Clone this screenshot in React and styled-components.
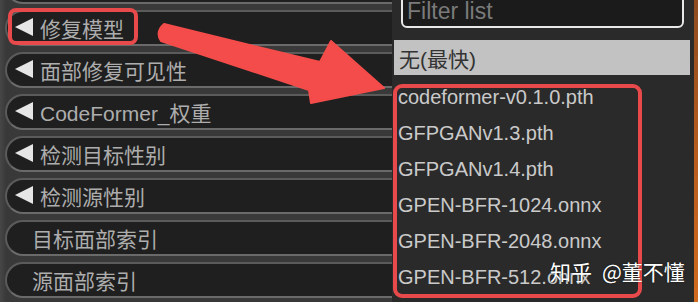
import React from "react";
import styled, { createGlobalStyle } from "styled-components";

const GlobalStyle = createGlobalStyle`
  html, body { margin: 0; padding: 0; background: #383838; }
  body { font-family: "Liberation Sans", "Noto Sans CJK SC", sans-serif; }
  * { box-sizing: border-box; }
`;

const Stage = styled.div`
  width: 698px;
  height: 302px;
  overflow: hidden;
  display: flex;
  background: #383838;
`;

const Main = styled.div`
  position: relative;
  flex: 1;
  overflow: hidden;
  background: linear-gradient(90deg, #474747 0px, #393939 6px);
`;

const EdgeStrip = styled.div`
  width: 4px;
  background: linear-gradient(180deg, #8e4b1f 0%, #b65c1f 50%, #d16b1f 100%);
`;

const RowList = styled.div`
  display: flex;
  flex-direction: column;
  gap: 6px;
  margin-top: -32px;
  padding-left: 5px;
  margin-right: -40px;
`;

const Row = styled.div`
  height: 36px;
  border: 2px solid #5b5b5b;
  border-bottom-color: #6a6a6a;
  border-right: none;
  border-radius: 18px 0 0 18px;
  background: #1f1f1f;
  display: flex;
  align-items: center;
  gap: 7px;
  padding-left: ${(p) => (p.$plain ? 25 : 8)}px;
  font-size: 21px;
  color: #adadad;
  white-space: nowrap;
`;

const Caret = styled.svg`
  width: 18px;
  height: 18px;
  flex: none;
  margin-top: -2px;
`;

const Dropdown = styled.div`
  position: absolute;
  left: 392px;
  top: -12px;
  width: 302px;
  height: 340px;
  background: #2a2a2a;
  display: flex;
  flex-direction: column;
  padding: 0 4px 0 2px;
`;

const FilterBox = styled.div`
  height: 40px;
  margin: 0 6px 0 7px;
  border: 2px solid #e8e8e8;
  border-radius: 6px;
  background: #1b1b1b;
  display: flex;
  align-items: flex-end;
  padding: 0 0 3px 4px;
  font-size: 23px;
  line-height: 1;
  color: #7a7a7a;
`;

const SelectedItem = styled.div`
  margin-top: 12px;
  height: 35px;
  background: #c2c2c2;
  color: #333333;
  font-size: 21px;
  display: flex;
  align-items: center;
  padding-left: 5px;
`;

const OptionList = styled.div`
  margin-top: 4px;
  display: flex;
  flex-direction: column;
`;

const Option = styled.div`
  height: 36px;
  display: flex;
  align-items: center;
  padding-left: 4px;
  font-size: 20px;
  color: #cacaca;
  white-space: nowrap;
`;

const Highlight = styled.div`
  position: absolute;
  left: ${(p) => p.$x}px;
  top: ${(p) => p.$y}px;
  width: ${(p) => p.$w}px;
  height: ${(p) => p.$h}px;
  border: 4px solid #e8494a;
  border-radius: ${(p) => p.$r}px;
  pointer-events: none;
`;

const ArrowSvg = styled.svg`
  position: absolute;
  left: 0;
  top: 0;
  width: 694px;
  height: 302px;
  pointer-events: none;
`;

const Watermark = styled.div`
  position: absolute;
  left: 550px;
  top: 261px;
  display: flex;
  gap: 10px;
  font-family: "Noto Sans CJK SC", sans-serif;
  font-size: 21px;
  line-height: 21px;
  color: #ffffff;
  text-shadow: 0 0 2px rgba(0, 0, 0, 0.6);
  white-space: nowrap;
`;

const rows = [
  { label: "", plain: true },
  { label: "修复模型" },
  { label: "面部修复可见性" },
  { label: "CodeFormer_权重" },
  { label: "检测目标性别" },
  { label: "检测源性别" },
  { label: "目标面部索引", plain: true },
  { label: "源面部索引", plain: true },
];

const options = [
  "codeformer-v0.1.0.pth",
  "GFPGANv1.3.pth",
  "GFPGANv1.4.pth",
  "GPEN-BFR-1024.onnx",
  "GPEN-BFR-2048.onnx",
  "GPEN-BFR-512.onnx",
];

export default function App() {
  return (
    <>
      <GlobalStyle />
      <Stage>
        <Main>
          <RowList>
            {rows.map((r, i) => (
              <Row key={i} $plain={r.plain}>
                {!r.plain && (
                  <Caret viewBox="0 0 18 18">
                    <polygon points="0,9 18,0 18,18" fill="#e6e6e6" />
                  </Caret>
                )}
                <span>{r.label}</span>
              </Row>
            ))}
          </RowList>

          <Dropdown>
            <FilterBox>Filter list</FilterBox>
            <SelectedItem>无(最快)</SelectedItem>
            <OptionList>
              {options.map((o) => (
                <Option key={o}>{o}</Option>
              ))}
            </OptionList>
          </Dropdown>

          <Highlight $x={8} $y={8} $w={130} $h={37} $r={8} />
          <Highlight $x={393} $y={84} $w={249} $h={214} $r={9} />

          <ArrowSvg viewBox="0 0 694 302">
            <path
              d="M164,24 L320,62 L331,41 L384,88 L311,103 L309,90 L161,41 Q155,32 164,24 Z"
              fill="#f44c4a"
              stroke="#f44c4a"
              strokeWidth="2"
              strokeLinejoin="round"
            />
          </ArrowSvg>

          <Watermark>
            <span>知乎</span>
            <span>@董不懂</span>
          </Watermark>
        </Main>
        <EdgeStrip />
      </Stage>
    </>
  );
}
